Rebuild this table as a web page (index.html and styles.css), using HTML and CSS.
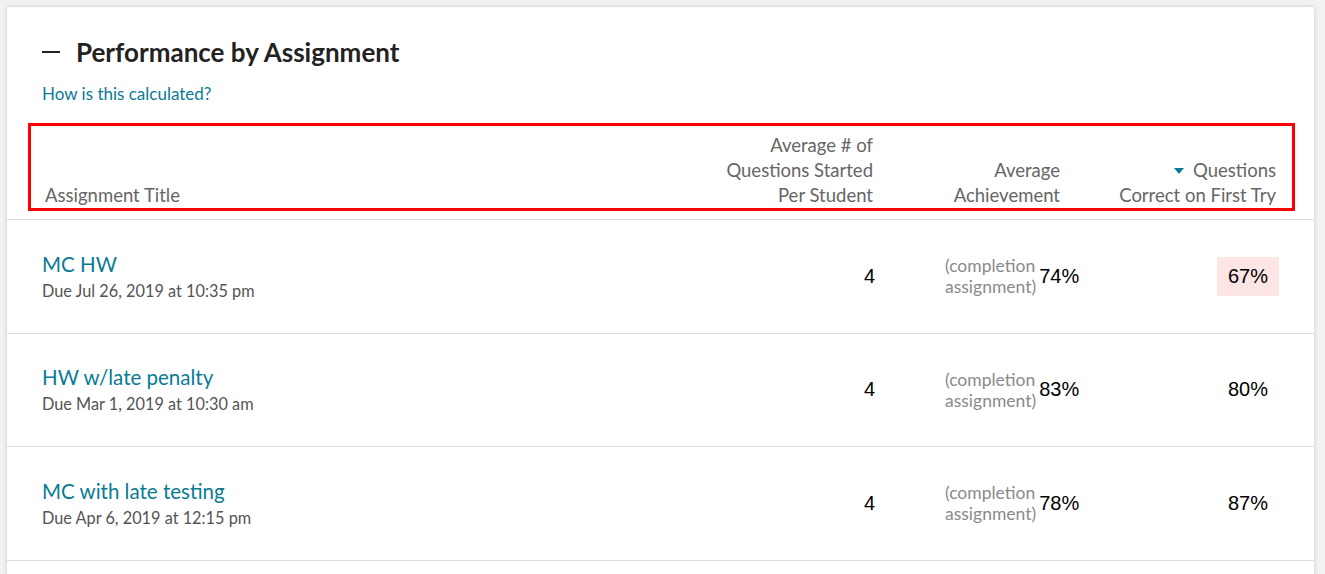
FILE: index.html
```html
<!DOCTYPE html>
<html lang="en">
<head>
<meta charset="utf-8">
<title>Performance by Assignment</title>
<link rel="stylesheet" href="styles.css">
</head>
<body>
<div class="card">
  <div class="card-head">
    <h2 class="title"><span class="minus"></span>Performance by Assignment</h2>
    <a class="help" href="#">How is this calculated?</a>
  </div>
  <div class="thead-wrap">
    <div class="thead">
      <div class="th th-title">Assignment Title</div>
      <div class="th th-num">Average # of<br>Questions Started<br>Per Student</div>
      <div class="th th-num">Average<br>Achievement</div>
      <div class="th th-num"><span class="sort"></span>Questions<br>Correct on First Try</div>
    </div>
  </div>
  <div class="row">
    <div class="cell-title">
      <a class="name" href="#">MC HW</a>
      <div class="due">Due Jul 26, 2019 at 10:35 pm</div>
    </div>
    <div class="cell-num">4</div>
    <div class="cell-ach"><span class="note">(completion<br>assignment)</span><span class="pct">74%</span></div>
    <div class="cell-first"><span class="val low">67%</span></div>
  </div>
  <div class="row">
    <div class="cell-title">
      <a class="name" href="#">HW w/late penalty</a>
      <div class="due">Due Mar 1, 2019 at 10:30 am</div>
    </div>
    <div class="cell-num">4</div>
    <div class="cell-ach"><span class="note">(completion<br>assignment)</span><span class="pct">83%</span></div>
    <div class="cell-first"><span class="val">80%</span></div>
  </div>
  <div class="row">
    <div class="cell-title">
      <a class="name" href="#">MC with late testing</a>
      <div class="due">Due Apr 6, 2019 at 12:15 pm</div>
    </div>
    <div class="cell-num">4</div>
    <div class="cell-ach"><span class="note">(completion<br>assignment)</span><span class="pct">78%</span></div>
    <div class="cell-first"><span class="val">87%</span></div>
  </div>
</div>
</body>
</html>
```
FILE: styles.css
```css
html, body {
  margin: 0;
  padding: 0;
}
body {
  background: #f2f2f2;
  padding: 7px 11px 0 7px;
  font-family: "Lato", "Open Sans", sans-serif;
  overflow: hidden;
}
.card {
  background: #fff;
  box-shadow: 0 0 4px rgba(0, 0, 0, 0.18);
  min-height: 600px;
}
.card-head {
  padding: 29px 35px 0 35px;
}
.title {
  margin: 0;
  display: flex;
  align-items: center;
  font-size: 26px;
  line-height: 32px;
  font-weight: 700;
  color: #222;
}
.minus {
  display: inline-block;
  width: 18px;
  height: 2px;
  background: #222;
  margin-right: 16px;
}
.help {
  display: block;
  margin-top: 15px;
  font-size: 17px;
  line-height: 22px;
  color: #0a7b95;
  text-decoration: none;
}
.thead-wrap {
  padding: 18px 19px 8px 21px;
  border-bottom: 1px solid #dcdcdc;
}
.thead {
  border: 3px solid #ff0000;
  display: grid;
  grid-template-columns: 1fr 200px 187px 216px;
  align-items: end;
  padding: 7px 16px 0 14px;
}
.th {
  font-size: 18.5px;
  line-height: 25px;
  color: #666;
}
.th-num {
  text-align: right;
}
.sort {
  display: inline-block;
  width: 0;
  height: 0;
  border-left: 5px solid transparent;
  border-right: 5px solid transparent;
  border-top: 6px solid #0a7b95;
  margin-right: 9px;
  vertical-align: 3px;
}
.row {
  display: grid;
  grid-template-columns: 1fr 200px 225px 179px;
  align-items: center;
  min-height: 112.5px;
  padding: 0 35px;
  border-bottom: 1px solid #dcdcdc;
}
.name {
  display: block;
  font-size: 20.5px;
  line-height: 26px;
  color: #0a7b95;
  text-decoration: none;
}
.due {
  margin-top: 3px;
  font-size: 16.3px;
  line-height: 22px;
  color: #555;
  font-weight: 400;
}
.cell-num {
  text-align: right;
  font-family: "Liberation Sans", Arial, sans-serif;
  font-size: 20px;
  color: #000;
}
.cell-ach {
  display: flex;
  align-items: center;
  padding-left: 70px;
}
.note {
  font-size: 17.5px;
  line-height: 21px;
  color: #8a8a8a;
  margin-right: 3px;
}
.pct, .val {
  font-family: "Liberation Sans", Arial, sans-serif;
  font-size: 20px;
  color: #000;
}
.cell-first {
  text-align: right;
}
.val {
  display: inline-block;
  padding: 0 11px;
  line-height: 39px;
}
.val.low {
  background: #fde5e4;
}
```
